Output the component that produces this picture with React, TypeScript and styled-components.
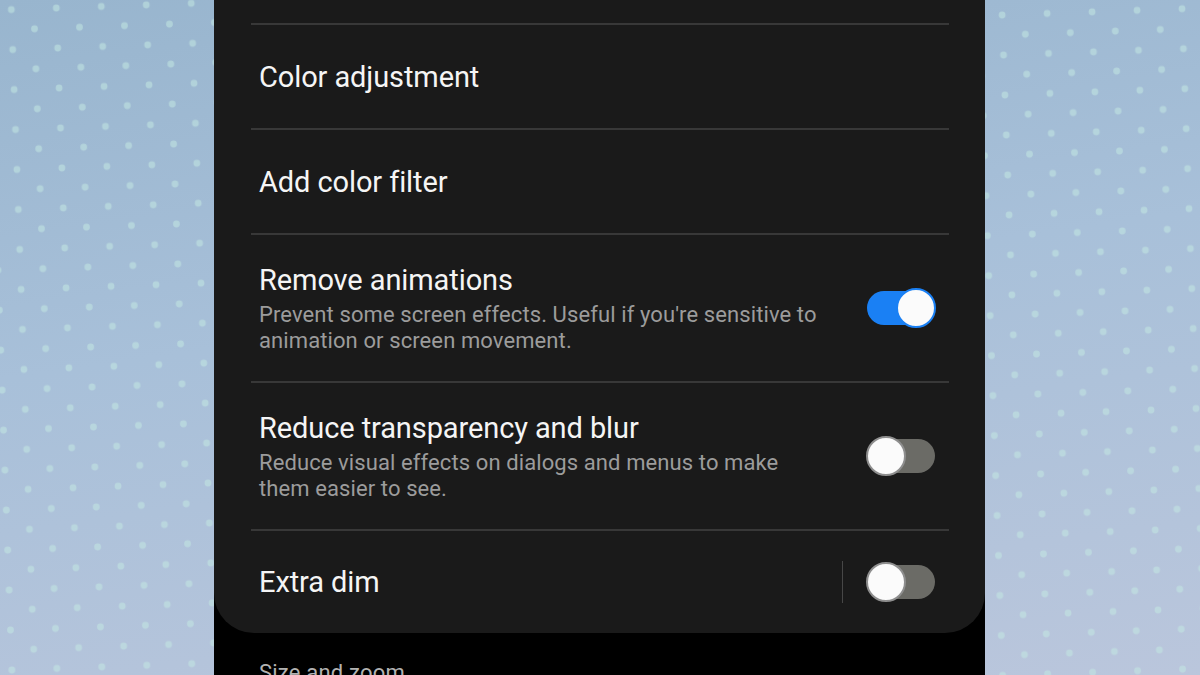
import React from "react";
import styled, { createGlobalStyle } from "styled-components";

const Global = createGlobalStyle`
  html, body {
    margin: 0;
    padding: 0;
    overflow: hidden;
    background: #a9bdd6;
  }
  #root {
    width: 1200px;
    height: 675px;
  }
  * { box-sizing: border-box; }
`;

const Page = styled.div`
  display: grid;
  width: 1200px;
  height: 675px;
  overflow: hidden;
  background: linear-gradient(172deg, #98b5ce 0%, #a8c0d9 45%, #bac6dc 100%);
  font-family: Roboto, "Noto Sans", sans-serif;
`;

const Wallpaper = styled.svg`
  grid-area: 1 / 1;
  width: 1200px;
  height: 675px;
  display: block;
`;

const Phone = styled.div`
  grid-area: 1 / 1;
  justify-self: start;
  margin-left: 214px;
  width: 771px;
  height: 675px;
  background: #000;
  display: flex;
  flex-direction: column;
`;

const Card = styled.div`
  background: #1a1a1a;
  border-radius: 0 0 40px 40px;
  padding: 23px 36px 0 37px;
  display: flex;
  flex-direction: column;
`;

const Row = styled.div<{ $h: number }>`
  height: ${(p) => p.$h}px;
  border-top: 2px solid #383838;
  display: flex;
  align-items: center;
  padding: 0 14px 0 8px;
`;

const TextBlock = styled.div`
  flex: 1;
  min-width: 0;
  display: flex;
  flex-direction: column;
`;

const Title = styled.div`
  font-size: 29px;
  line-height: 34px;
  color: #f5f5f5;
  letter-spacing: -0.1px;
`;

const Subtitle = styled.div`
  margin-top: 5px;
  max-width: 568px;
  font-size: 22px;
  line-height: 26px;
  color: #9c9c9c;
  letter-spacing: 0.1px;
`;

const Track = styled.div<{ $on: boolean }>`
  position: relative;
  flex: none;
  width: 68px;
  height: 34px;
  border-radius: 17px;
  background: ${(p) => (p.$on ? "#1a80f4" : "#6b6b66")};
`;

const Knob = styled.div<{ $on: boolean }>`
  position: absolute;
  top: -3px;
  left: ${(p) => (p.$on ? "29px" : "-1px")};
  width: 40px;
  height: 40px;
  border-radius: 50%;
  background: #fbfbfb;
  border: 2px solid ${(p) => (p.$on ? "#1a80f4" : "#8e8e8e")};
`;

const VDivider = styled.div`
  flex: none;
  width: 1px;
  height: 42px;
  background: #474747;
  margin-right: 24px;
`;

const SectionHeader = styled.div`
  margin-top: 27px;
  padding-left: 45px;
  font-size: 22px;
  line-height: 26px;
  color: #b3b3b3;
  letter-spacing: 0.2px;
`;

const Switch = ({ on }: { on: boolean }) => (
  <Track $on={on}>
    <Knob $on={on} />
  </Track>
);

export default function App() {
  return (
    <>
      <Global />
      <Page>
        <Wallpaper viewBox="0 0 1200 675" aria-hidden="true">
          <defs>
            <pattern
              id="dots"
              width="45"
              height="40"
              patternUnits="userSpaceOnUse"
              patternTransform="rotate(-2)"
            >
              <circle cx="11" cy="10" r="3.4" fill="#c3e6e2" fillOpacity="0.55" />
              <circle cx="33.5" cy="30" r="3.4" fill="#c3e6e2" fillOpacity="0.55" />
            </pattern>
          </defs>
          <rect width="1200" height="675" fill="url(#dots)" />
        </Wallpaper>
        <Phone>
          <Card>
            <Row $h={105}>
              <TextBlock>
                <Title>Color adjustment</Title>
              </TextBlock>
            </Row>
            <Row $h={105}>
              <TextBlock>
                <Title>Add color filter</Title>
              </TextBlock>
            </Row>
            <Row $h={148}>
              <TextBlock>
                <Title>Remove animations</Title>
                <Subtitle>
                  Prevent some screen effects. Useful if you're sensitive to animation or screen movement.
                </Subtitle>
              </TextBlock>
              <Switch on={true} />
            </Row>
            <Row $h={148}>
              <TextBlock>
                <Title>Reduce transparency and blur</Title>
                <Subtitle>
                  Reduce visual effects on dialogs and menus to make them easier to see.
                </Subtitle>
              </TextBlock>
              <Switch on={false} />
            </Row>
            <Row $h={104}>
              <TextBlock>
                <Title>Extra dim</Title>
              </TextBlock>
              <VDivider />
              <Switch on={false} />
            </Row>
          </Card>
          <SectionHeader>Size and zoom</SectionHeader>
        </Phone>
      </Page>
    </>
  );
}
